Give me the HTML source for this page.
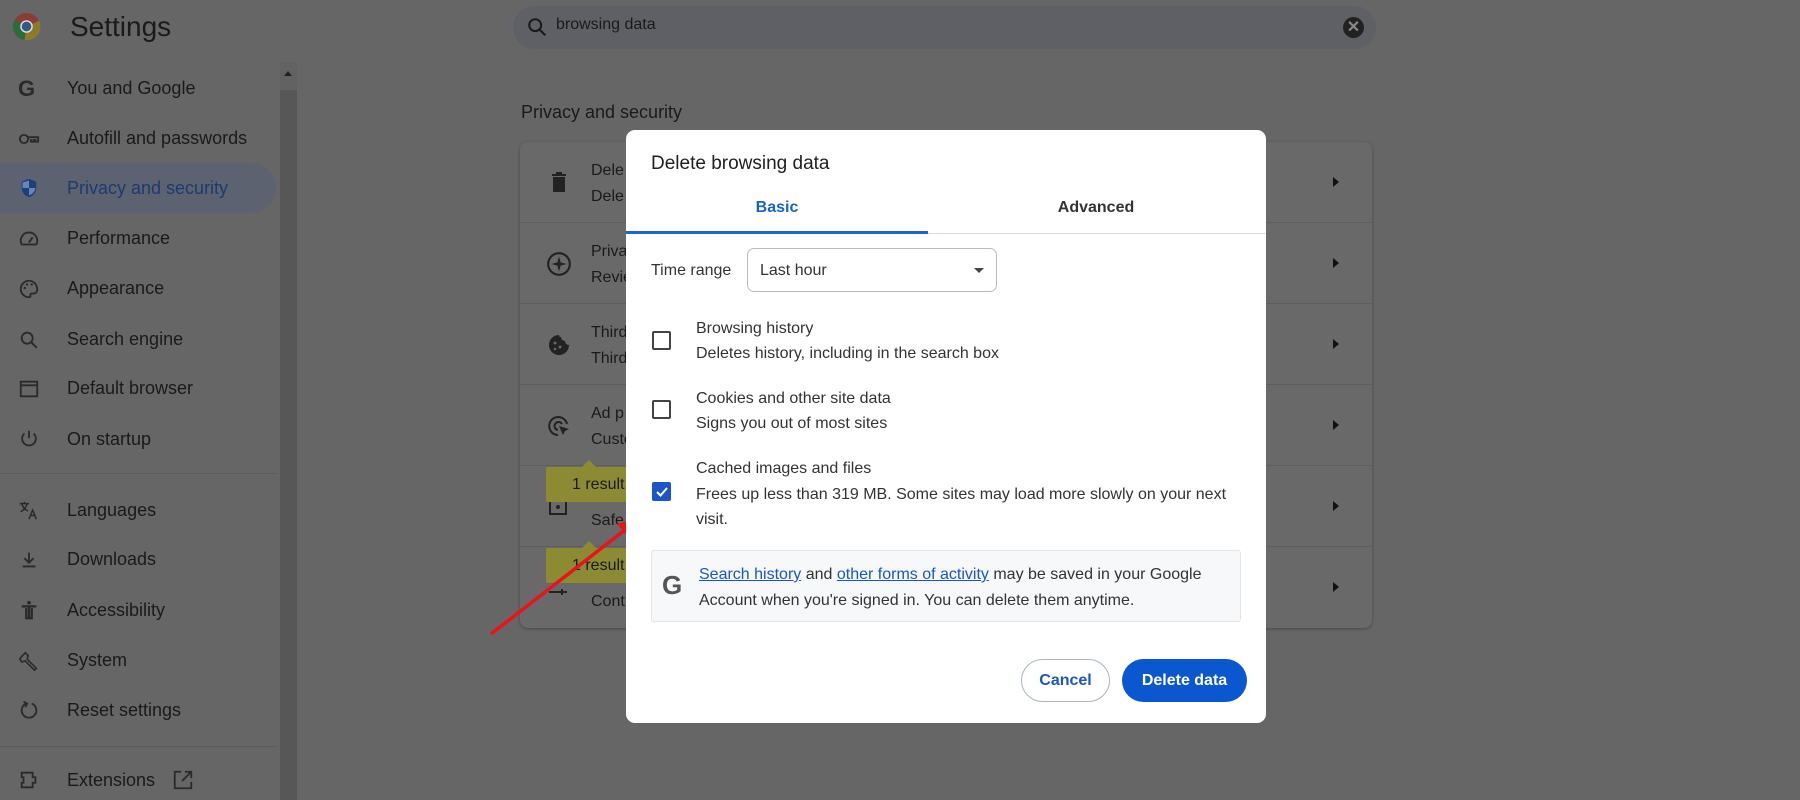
<!DOCTYPE html>
<html><head><meta charset="utf-8"><style>
*{box-sizing:border-box;margin:0;padding:0}
body{width:1800px;height:800px;overflow:hidden;background:#666;font-family:"Liberation Sans",sans-serif;color:#1c1c1c;position:relative}
.a{position:absolute}
.nav{position:absolute;left:67px;font-size:18px;color:#1a1a1a}
.ic{position:absolute;left:18px;width:22px;height:22px;white-space:nowrap}
.row{position:absolute;left:520px;width:852px;height:81px;border-bottom:1px solid #5e5e5e}
.row .t{position:absolute;left:71px;font-size:16px;color:#1a1a1a}
.arr{position:absolute;left:813px;top:35px;width:0;height:0;border-left:6px solid #111;border-top:5px solid transparent;border-bottom:5px solid transparent}
.dlg{position:absolute;left:626px;top:130px;width:640px;height:593px;background:#fff;border-radius:9px;color:#1f1f1f}
.cb{position:absolute;left:26px;width:19px;height:19px;border:2px solid #444;border-radius:2px}
.lt{position:absolute;left:70px;font-size:16px;color:#333}
.badge{position:absolute;left:546px;width:84px;height:35px;background:#8c8a33;font-size:16px;color:#1a1a1a;padding:9px 0 0 26px;border-radius:2px}
</style></head><body>
<svg class="a" style="left:12px;top:12px" width="29" height="29" viewBox="0 0 30 30">
<circle cx="15" cy="15" r="14" fill="#8a3c35"/>
<path d="M15 15 L3 8 A14 14 0 0 0 13 29 Z" fill="#2e6a3a"/>
<path d="M15 15 L13 29 A14 14 0 0 0 28 9 Z" fill="#8c7a2a"/>
<circle cx="15" cy="15" r="6.5" fill="#ddd"/><circle cx="15" cy="15" r="5" fill="#2f5a8a"/></svg>
<div class="a" style="left:70px;top:11px;font-size:28px;color:#1a1a1a">Settings</div>
<div class="a" style="left:513px;top:6px;width:863px;height:43px;border-radius:22px;background:#5f6066"></div>
<svg class="a" style="left:526px;top:16px" width="22" height="22" viewBox="0 0 24 24"><circle cx="10" cy="10" r="6.5" fill="none" stroke="#1a1a1a" stroke-width="2.2"/><path d="M15 15l6 6" stroke="#1a1a1a" stroke-width="2.4"/></svg>
<div class="a" style="left:556px;top:16px;font-size:16px;color:#1a1a1a">browsing data</div>
<div class="a" style="left:1343px;top:17px;width:21px;height:21px;border-radius:50%;background:#222;color:#888;font-size:16px;text-align:center;line-height:21px;font-weight:bold">✕</div>
<div class="a" style="left:0;top:163px;width:276px;height:50px;background:#5c6270;border-radius:0 25px 25px 0"></div>
<div class="a" style="left:280px;top:62px;width:17px;height:738px;background:#575757"></div>
<div class="a" style="left:280px;top:62px;width:17px;height:28px;background:#626262"></div>
<div class="a" style="left:284px;top:71px;border-left:4px solid transparent;border-right:4px solid transparent;border-bottom:5px solid #222"></div>
<div class="a" style="left:0;top:473px;width:278px;height:1px;background:#5c5c5c"></div>
<div class="a" style="left:0;top:746px;width:278px;height:1px;background:#5c5c5c"></div>
<div class="ic" style="top:76px;font-weight:bold;font-size:22px;color:#2a2a2a">G</div>
<div class="nav" style="top:78px">You and Google</div>
<svg class="ic" style="top:128px" viewBox="0 0 24 24"><circle cx="6.5" cy="12" r="4.5" fill="none" stroke="#2a2a2a" stroke-width="2"/><path d="M11 10h11v5h-3v-2h-2v2h-3v-3" fill="none" stroke="#2a2a2a" stroke-width="2"/></svg>
<div class="nav" style="top:128px">Autofill and passwords</div>
<svg class="ic" style="top:177px" viewBox="0 0 24 24"><path d="M12 2l8 3v7c0 5-4 9-8 10-4-1-8-5-8-10V5z" fill="#1f3f78"/><path d="M12 4v8H5V6zM12 12h7c-.5 4-3.5 7-7 8z" fill="#6a86b8"/></svg>
<div class="nav" style="top:178px;color:#1c3a70">Privacy and security</div>
<svg class="ic" style="top:228px" viewBox="0 0 24 24"><path d="M4 18a9 9 0 1 1 16 0z" fill="none" stroke="#2a2a2a" stroke-width="2"/><path d="M12 16l4-6" stroke="#2a2a2a" stroke-width="2"/></svg>
<div class="nav" style="top:228px">Performance</div>
<svg class="ic" style="top:278px" viewBox="0 0 24 24"><path d="M12 3a9 9 0 0 0 0 18c1.5 0 2-1 1.5-2s0-2 1.5-2h2a4 4 0 0 0 4-4c0-6-4-10-9-10z" fill="none" stroke="#2a2a2a" stroke-width="2"/><circle cx="7.5" cy="11" r="1.3" fill="#2a2a2a"/><circle cx="10" cy="7" r="1.3" fill="#2a2a2a"/><circle cx="15" cy="7" r="1.3" fill="#2a2a2a"/></svg>
<div class="nav" style="top:278px">Appearance</div>
<svg class="ic" style="top:329px" viewBox="0 0 24 24"><circle cx="10" cy="10" r="6" fill="none" stroke="#2a2a2a" stroke-width="2"/><path d="M14.5 14.5l6 6" stroke="#2a2a2a" stroke-width="2.2"/></svg>
<div class="nav" style="top:329px">Search engine</div>
<svg class="ic" style="top:378px" viewBox="0 0 24 24"><rect x="3" y="4" width="18" height="16" fill="none" stroke="#2a2a2a" stroke-width="2"/><path d="M3 8h18" stroke="#2a2a2a" stroke-width="2"/></svg>
<div class="nav" style="top:378px">Default browser</div>
<svg class="ic" style="top:428px" viewBox="0 0 24 24"><path d="M12 3v8M7 6a7.5 7.5 0 1 0 10 0" fill="none" stroke="#2a2a2a" stroke-width="2"/></svg>
<div class="nav" style="top:429px">On startup</div>
<svg class="ic" style="top:499px" viewBox="0 0 24 24"><path d="M2 5h10M7 3v2M4 5c1 4 4 7 7 8M10 5c-1 4-4 7-7 9" fill="none" stroke="#2a2a2a" stroke-width="1.6"/><path d="M12 22l4-10 4 10M13.5 18h5" fill="none" stroke="#2a2a2a" stroke-width="1.6"/></svg>
<div class="nav" style="top:500px">Languages</div>
<svg class="ic" style="top:549px" viewBox="0 0 24 24"><path d="M12 4v10M7 10l5 5 5-5M5 19h14" fill="none" stroke="#2a2a2a" stroke-width="2"/></svg>
<div class="nav" style="top:549px">Downloads</div>
<svg class="ic" style="top:599px" viewBox="0 0 24 24"><circle cx="12" cy="4" r="2" fill="#2a2a2a"/><path d="M4 8h16M12 8v13M9 10v11h6V10" fill="none" stroke="#2a2a2a" stroke-width="2.5"/></svg>
<div class="nav" style="top:600px">Accessibility</div>
<svg class="ic" style="top:650px" viewBox="0 0 24 24"><path d="M4 7l4-4 3 3-1 4 10 10-2 2L8 12l-4 1-2-3z" fill="none" stroke="#2a2a2a" stroke-width="1.8"/></svg>
<div class="nav" style="top:650px">System</div>
<svg class="ic" style="top:699px" viewBox="0 0 24 24"><path d="M9 5a8 8 0 1 0 6 0" fill="none" stroke="#2a2a2a" stroke-width="2"/><path d="M6 3l4 2-2 4" fill="none" stroke="#2a2a2a" stroke-width="2"/></svg>
<div class="nav" style="top:700px">Reset settings</div>
<svg class="ic" style="top:769px" viewBox="0 0 24 24"><path d="M4 4h6v-0h6v5h3v6h-3v5H4v-5h2v-6H4z" fill="none" stroke="#2a2a2a" stroke-width="2"/></svg>
<div class="nav" style="top:770px">Extensions</div>
<svg class="a" style="left:172px;top:769px" width="22" height="22" viewBox="0 0 24 24"><path d="M10 3H3v18h18v-7M14 3h7v7M21 3L11 13" fill="none" stroke="#2a2a2a" stroke-width="2"/></svg>
<div class="a" style="left:521px;top:102px;font-size:18px;color:#1a1a1a">Privacy and security</div>
<div class="a" style="left:520px;top:142px;width:852px;height:486px;background:#696969;border-radius:8px;box-shadow:0 1px 3px rgba(0,0,0,.3)"></div>
<div class="row" style="top:142px"><svg class="a" style="left:29px;top:29px" width="20" height="22" viewBox="0 0 20 22"><path d="M3 3h14v2H3zM7 1h6v2H7zM4 6h12v15H4z" fill="#222"/></svg><div class="t" style="top:20px">Dele</div><div class="t" style="top:46px">Dele</div><div class="arr"></div></div>
<div class="row" style="top:223px"><svg class="a" style="left:26px;top:28px" width="26" height="26" viewBox="0 0 24 24"><circle cx="12" cy="12" r="10" fill="none" stroke="#222" stroke-width="2"/><path d="M12 5l1.5 5.5L19 12l-5.5 1.5L12 19l-1.5-5.5L5 12l5.5-1.5z" fill="#222"/></svg><div class="t" style="top:20px">Priva</div><div class="t" style="top:46px">Revie</div><div class="arr"></div></div>
<div class="row" style="top:304px"><svg class="a" style="left:27px;top:29px" width="24" height="24" viewBox="0 0 24 24"><path d="M12 2a10 10 0 1 0 10 10 4 4 0 0 1-4-4 4 4 0 0 1-4-4 2 2 0 0 1-2-2z" fill="#222"/><circle cx="8" cy="10" r="1.5" fill="#666"/><circle cx="13" cy="14" r="1.5" fill="#666"/><circle cx="8" cy="16" r="1.3" fill="#666"/></svg><div class="t" style="top:20px">Third</div><div class="t" style="top:46px">Third</div><div class="arr"></div></div>
<div class="row" style="top:385px"><svg class="a" style="left:27px;top:29px" width="24" height="24" viewBox="0 0 24 24"><path d="M20 10a9 9 0 1 0-9 11" fill="none" stroke="#222" stroke-width="2"/><path d="M15 10a4 4 0 1 0-4 6" fill="none" stroke="#222" stroke-width="2"/><path d="M12 12l10 3-4 2-2 4z" fill="#222"/></svg><div class="t" style="top:20px">Ad p</div><div class="t" style="top:46px">Custo</div><div class="arr"></div></div>
<div class="row" style="top:466px"><svg class="a" style="left:28px;top:30px" width="20" height="20" viewBox="0 0 20 20"><rect x="2" y="3" width="16" height="15" fill="none" stroke="#222" stroke-width="2"/><circle cx="10" cy="11" r="2" fill="#222"/></svg><div class="t" style="top:46px">Safe</div><div class="arr"></div></div>
<div class="row" style="top:547px;border:none"><svg class="a" style="left:27px;top:30px" width="22" height="20" viewBox="0 0 22 20"><path d="M2 5h18M2 15h18M7 2v6M15 12v6" stroke="#222" stroke-width="2"/></svg><div class="t" style="top:46px">Cont</div><div class="arr"></div></div>
<div class="badge" style="top:467px">1 result</div>
<div class="a" style="left:582px;top:460px;border-left:7px solid transparent;border-right:7px solid transparent;border-bottom:7px solid #8c8a33"></div>
<div class="badge" style="top:548px">1 result</div>
<div class="a" style="left:582px;top:541px;border-left:7px solid transparent;border-right:7px solid transparent;border-bottom:7px solid #8c8a33"></div>
<svg class="a" style="left:0;top:0" width="1800" height="800"><path d="M491 634L630 526" stroke="#e8141a" stroke-width="3.5"/><path d="M641 517L617 524L628 537Z" fill="#e8141a"/></svg>
<div class="dlg">
<div class="a" style="left:25px;top:23px;font-size:19px">Delete browsing data</div>
<div class="a" style="left:0;top:69px;width:302px;text-align:center;font-size:16px;font-weight:bold;color:#1a62c8">Basic</div>
<div class="a" style="left:320px;top:69px;width:300px;text-align:center;font-size:16px;font-weight:bold;color:#333">Advanced</div>
<div class="a" style="left:0;top:103px;width:640px;height:1px;background:#ddd"></div>
<div class="a" style="left:0;top:101px;width:302px;height:3px;background:#1a66d2"></div>
<div class="a" style="left:25px;top:132px;font-size:16px;color:#333">Time range</div>
<div class="a" style="left:121px;top:118px;width:250px;height:44px;border:1px solid #bbb;border-radius:7px"></div>
<div class="a" style="left:134px;top:132px;font-size:16px;color:#333">Last hour</div>
<div class="a" style="left:348px;top:138px;border-left:5px solid transparent;border-right:5px solid transparent;border-top:5px solid #444"></div>
<div class="cb" style="top:201px"></div>
<div class="lt" style="top:190px">Browsing history</div>
<div class="lt" style="top:215px">Deletes history, including in the search box</div>
<div class="cb" style="top:270px"></div>
<div class="lt" style="top:260px">Cookies and other site data</div>
<div class="lt" style="top:285px">Signs you out of most sites</div>
<div class="cb" style="top:352px;background:#1a56c8;border-color:#1a56c8"></div>
<svg class="a" style="left:29px;top:355px" width="14" height="14" viewBox="0 0 14 14"><path d="M2 7l3.5 3.5L12 3" fill="none" stroke="#fff" stroke-width="2"/></svg>
<div class="lt" style="top:330px">Cached images and files</div>
<div class="lt" style="top:352px;width:560px;line-height:25px">Frees up less than 319 MB. Some sites may load more slowly on your next visit.</div>
<div class="a" style="left:25px;top:420px;width:590px;height:72px;background:#f7f8fa;border:1px solid #e4e4e4;border-radius:3px"></div>
<div class="a" style="left:36px;top:440px;font-size:26px;font-weight:bold;color:#555">G</div>
<div class="a" style="left:73px;top:432px;width:530px;font-size:16px;line-height:26px;color:#333"><span style="color:#1a56c8;text-decoration:underline">Search history</span> and <span style="color:#1a56c8;text-decoration:underline">other forms of activity</span> may be saved in your Google Account when you're signed in. You can delete them anytime.</div>
<div class="a" style="left:395px;top:529px;width:89px;height:43px;border:1px solid #a9b4c8;border-radius:22px;text-align:center;line-height:41px;font-size:16px;font-weight:bold;color:#1a56c8">Cancel</div>
<div class="a" style="left:496px;top:529px;width:125px;height:43px;background:#0b57d0;border-radius:22px;text-align:center;line-height:43px;font-size:16px;font-weight:bold;color:#fff">Delete data</div>
</div>
</body></html>
